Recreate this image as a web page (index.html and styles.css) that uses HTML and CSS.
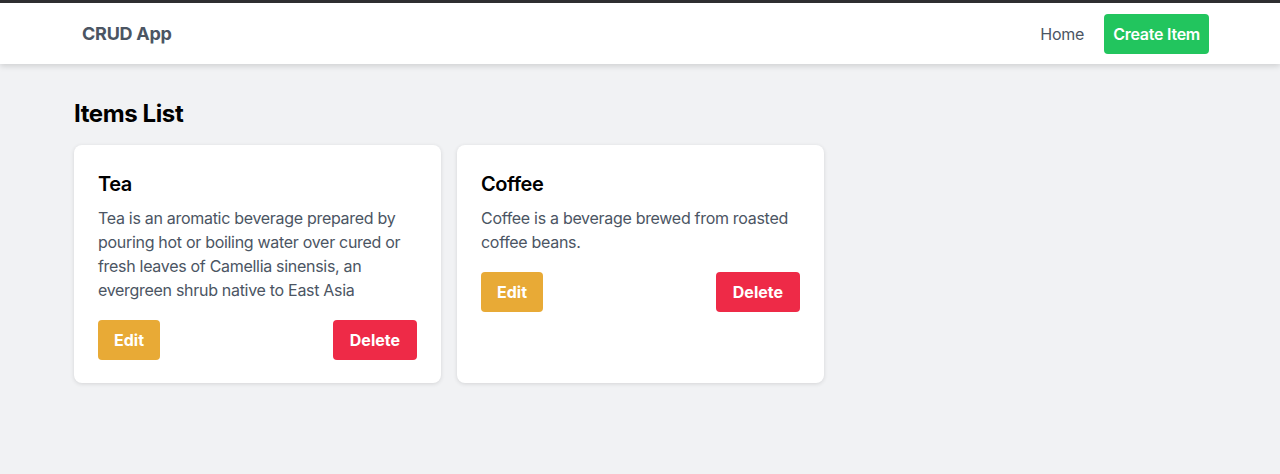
FILE: index.html
```html
<!DOCTYPE html>
<html lang="en">
<head>
<meta charset="utf-8">
<title>CRUD App</title>
<link rel="stylesheet" href="styles.css">
</head>
<body>
<nav class="nav">
  <a class="brand" href="#">CRUD App</a>
  <div class="nav-links">
    <a class="nav-link" href="#">Home</a>
    <a class="btn btn-green" href="#">Create Item</a>
  </div>
</nav>
<main class="main">
  <h1 class="heading">Items List</h1>
  <div class="grid">
    <div class="card">
      <h2 class="card-title">Tea</h2>
      <p class="card-desc">Tea is an aromatic beverage prepared by pouring hot or boiling water over cured or fresh leaves of Camellia sinensis, an evergreen shrub native to East Asia</p>
      <div class="card-actions">
        <button class="btn btn-edit">Edit</button>
        <button class="btn btn-delete">Delete</button>
      </div>
    </div>
    <div class="card">
      <h2 class="card-title">Coffee</h2>
      <p class="card-desc">Coffee is a beverage brewed from roasted coffee beans.</p>
      <div class="card-actions">
        <button class="btn btn-edit">Edit</button>
        <button class="btn btn-delete">Delete</button>
      </div>
    </div>
  </div>
</main>
</body>
</html>
```
FILE: styles.css
```css
* { box-sizing: border-box; }
html, body { margin: 0; padding: 0; }
body {
  background: #f1f2f4;
  font-family: Inter, "Liberation Sans", sans-serif;
  color: #111;
  height: 474px;
  overflow: hidden;
}
.nav {
  height: 64px;
  border-top: 3px solid #2f2f31;
  background: #fff;
  display: flex;
  align-items: center;
  justify-content: space-between;
  padding: 0 71px 0 82px;
  box-shadow: 0 2px 6px rgba(0,0,0,0.15);
  position: relative;
}
.brand {
  font-size: 18px;
  font-weight: 700;
  color: #4b5563;
  text-decoration: none;
  letter-spacing: -0.25px;
}
.nav-links {
  display: flex;
  align-items: center;
  gap: 20px;
}
.nav-link {
  font-size: 16px;
  color: #4b5563;
  text-decoration: none;
  letter-spacing: -0.25px;
}
.btn {
  font-family: inherit;
  font-size: 16px;
  line-height: 24px;
  border: 0;
  border-radius: 4px;
  padding: 8px 16px;
  color: #fff;
  text-decoration: none;
  display: inline-block;
  cursor: pointer;
}
.btn-green {
  background: #22c55e;
  font-weight: 600;
  padding: 8px 9px;
  letter-spacing: -0.25px;
}
.main {
  padding: 34px 74px 0 74px;
}
.heading {
  margin: 0 0 15px;
  font-size: 24px;
  line-height: 32px;
  font-weight: 700;
  color: #000;
  letter-spacing: -0.4px;
}
.grid {
  display: grid;
  grid-template-columns: repeat(3, 366.5px);
  gap: 16.5px;
  align-items: start;
}
.card {
  background: #fff;
  border-radius: 8px;
  padding: 25px 24px 24px;
  height: 238px;
  box-shadow: 0 1px 4px rgba(0,0,0,0.12);
}
.card-title {
  margin: 0 0 8px;
  font-size: 20px;
  line-height: 28px;
  font-weight: 600;
  color: #000;
  letter-spacing: -0.4px;
}
.card-desc {
  margin: 0 0 18px;
  font-size: 16px;
  line-height: 24px;
  color: #4b5563;
  letter-spacing: -0.3px;
}
.card-actions {
  display: flex;
  justify-content: space-between;
}
.btn-edit {
  background: #e8aa36;
  font-weight: 700;
}
.btn-delete {
  background: #ee2a47;
  font-weight: 700;
  padding: 8px 16.5px;
}
```
